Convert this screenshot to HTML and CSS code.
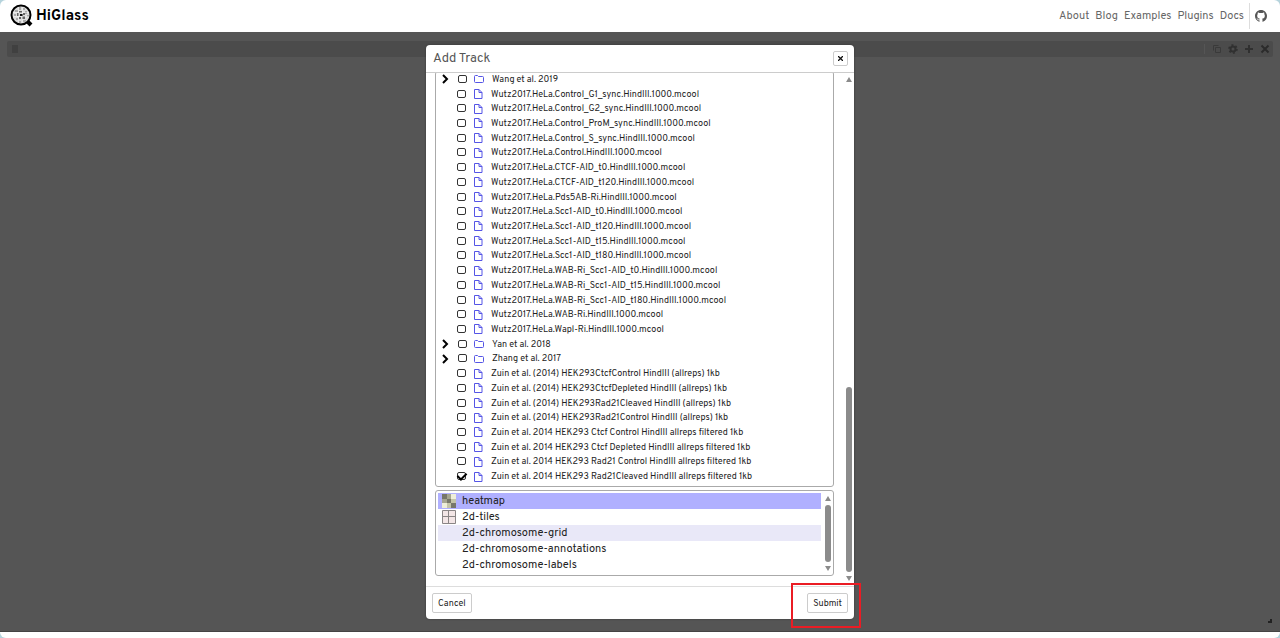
FILE: index.html
```html
<!DOCTYPE html>
<html lang="en">
<head>
    <meta charset="UTF-8">
    <title>HiGlass</title>
    <link rel="stylesheet" href="styles.css">
</head>
<body>
    <header class="topbar">
        <a class="brand" href="#">
            <svg width="24" height="24" viewBox="0 0 24 24">
                <path d="M17 17l4 4" stroke="#000" stroke-width="4"/>
                <circle cx="11" cy="11" r="9.500" fill="#ddd" stroke="#000" stroke-width="2"/>
                <path d="M9 3h2v3H9zM13 4h2v2h-2zM5 6h3v2H5zM4 10h2v2H4zM15 7h2v3h-2zM17 11h2v2h-2zM6 14h2v2H6zM13 16h3v2h-3zM9 17h2v2H9z" fill="#aaa"/>
                <path d="M9 7h3v2H9zM7 9h2v3H7zM12 12h3v3h-3zM9 13h2v2H9zM13 9h2v2h-2z" fill="#666"/>
                <path d="M10 10h3v2h-3z" fill="#111"/>
                <path d="M3 8.500h16M3 12.500h16M8.500 3v16M12.500 3v16" stroke="#fff" stroke-width=".4"/>
            </svg>
            <span>HiGlass</span>
        </a>
        <nav class="nav">
            <a href="#">About</a>
            <a href="#">Blog</a>
            <a href="#">Examples</a>
            <a href="#">Plugins</a>
            <a href="#">Docs</a>
        </nav>
        <a class="github" href="#" aria-label="GitHub">
            <svg width="12" height="12" viewBox="0 0 16 16" fill="#555"><path d="M8 0C3.580 0 0 3.580 0 8c0 3.540 2.290 6.530 5.470 7.590.4.070.550-.170.550-.380 0-.190-.010-.820-.010-1.490-2.010.370-2.530-.490-2.690-.940-.090-.230-.480-.940-.820-1.130-.280-.150-.680-.520-.010-.530.630-.010 1.080.580 1.230.820.720 1.210 1.870.870 2.330.660.070-.520.280-.870.510-1.070-1.780-.2-3.640-.890-3.640-3.950 0-.870.310-1.590.820-2.150-.080-.2-.360-1.020.080-2.120 0 0 .670-.210 2.200.820A7.600 7.600 0 0 1 8 3.860c.680 0 1.360.090 2 .270 1.530-1.040 2.200-.820 2.200-.820.440 1.100.160 1.920.080 2.120.510.560.820 1.270.820 2.150 0 3.070-1.870 3.750-3.650 3.950.290.250.540.730.540 1.480 0 1.070-.010 1.930-.010 2.200 0 .210.150.460.550.380A8 8 0 0 0 16 8c0-4.420-3.580-8-8-8z"/></svg>
        </a>
    </header>

    <main class="stage">
        <div class="view-bar">
            <span class="grip"></span>
            <div class="view-tools">
                <button aria-label="Copy view"><svg width="10" height="10" viewBox="0 0 10 10" fill="none" stroke="#3a3a3a"><path d="M3.500 3.500h5v5h-5z"/><path d="M1.500 6.500v-5h5"/></svg></button>
                <button aria-label="Settings"><svg width="10" height="10" viewBox="0 0 10 10" fill="none" stroke="#303030"><circle cx="5" cy="5" r="2.500" stroke-width="2"/><circle cx="5" cy="5" r="4" stroke-width="1.500" stroke-dasharray="2 2.190"/></svg></button>
                <button aria-label="Add track"><svg width="10" height="10" viewBox="0 0 10 10" stroke="#303030" stroke-width="2"><path d="M5 1v8M1 5h8"/></svg></button>
                <button aria-label="Close view"><svg width="10" height="10" viewBox="0 0 10 10" stroke="#2b2b2b" stroke-width="2"><path d="M1.500 1.500l7 7M8.500 1.500l-7 7"/></svg></button>
            </div>
        </div>
        <span class="resize"></span>

        <div class="overlay">
            <section class="modal">
                <div class="modal-header">
                    <h1>Add Track</h1>
                    <button class="btn close" aria-label="Close"><svg width="5" height="5" viewBox="0 0 5 5" stroke="#111" stroke-width="1.300"><path d="M0 0l5 5M5 0l-5 5"/></svg></button>
                </div>
                <div class="modal-body">
                    <div class="content">
                        <ul class="tree" id="tree"></ul>
                        <div class="types">
                            <ul class="type-list">
                                <li><button class="type selected"><svg width="14" height="14" viewBox="0 0 14 14"><path fill="#c4c4a8" d="M0 0h14v14H0z"/><path fill="#77776a" d="M0 0h5v5H0zM9 9h5v5H9zM5 5h4v4H5z"/><path fill="#eeeed8" d="M9 0h5v5H9zM0 9h5v5H0z"/><path fill="#a5a590" d="M5 0h4v5H5zM0 5h5v4H0z"/></svg>heatmap</button></li>
                                <li><button class="type"><svg width="14" height="14" viewBox="0 0 14 14" fill="#f3e6e6" stroke="#8a8585"><path d="M.5.500h13v13H.500zM6.500.500v13M.500 6.500h13"/></svg>2d-tiles</button></li>
                                <li><button class="type hovered"><span class="no-icon"></span>2d-chromosome-grid</button></li>
                                <li><button class="type"><span class="no-icon"></span>2d-chromosome-annotations</button></li>
                                <li><button class="type"><span class="no-icon"></span>2d-chromosome-labels</button></li>
                            </ul>
                            <div class="scrollbar">
                                <span class="arrow up"></span>
                                <span class="thumb"></span>
                                <span class="arrow down"></span>
                            </div>
                        </div>
                    </div>
                    <div class="scrollbar">
                        <span class="arrow up"></span>
                        <span class="track-space"></span>
                        <span class="thumb"></span>
                        <span class="arrow down"></span>
                    </div>
                </div>
                <div class="modal-footer">
                    <button class="btn">Cancel</button>
                    <button class="btn">Submit</button>
                </div>
                <span class="marker"></span>
            </section>
        </div>
    </main>

    <script>
        const datasets = [
            { name: 'Wang et al. 2019', folder: true },
            { name: 'Wutz2017.HeLa.Control_G1_sync.HindIII.1000.mcool' },
            { name: 'Wutz2017.HeLa.Control_G2_sync.HindIII.1000.mcool' },
            { name: 'Wutz2017.HeLa.Control_ProM_sync.HindIII.1000.mcool' },
            { name: 'Wutz2017.HeLa.Control_S_sync.HindIII.1000.mcool' },
            { name: 'Wutz2017.HeLa.Control.HindIII.1000.mcool' },
            { name: 'Wutz2017.HeLa.CTCF-AID_t0.HindIII.1000.mcool' },
            { name: 'Wutz2017.HeLa.CTCF-AID_t120.HindIII.1000.mcool' },
            { name: 'Wutz2017.HeLa.Pds5AB-Ri.HindIII.1000.mcool' },
            { name: 'Wutz2017.HeLa.Scc1-AID_t0.HindIII.1000.mcool' },
            { name: 'Wutz2017.HeLa.Scc1-AID_t120.HindIII.1000.mcool' },
            { name: 'Wutz2017.HeLa.Scc1-AID_t15.HindIII.1000.mcool' },
            { name: 'Wutz2017.HeLa.Scc1-AID_t180.HindIII.1000.mcool' },
            { name: 'Wutz2017.HeLa.WAB-Ri_Scc1-AID_t0.HindIII.1000.mcool' },
            { name: 'Wutz2017.HeLa.WAB-Ri_Scc1-AID_t15.HindIII.1000.mcool' },
            { name: 'Wutz2017.HeLa.WAB-Ri_Scc1-AID_t180.HindIII.1000.mcool' },
            { name: 'Wutz2017.HeLa.WAB-Ri.HindIII.1000.mcool' },
            { name: 'Wutz2017.HeLa.Wapl-Ri.HindIII.1000.mcool' },
            { name: 'Yan et al. 2018', folder: true },
            { name: 'Zhang et al. 2017', folder: true },
            { name: 'Zuin et al. (2014) HEK293CtcfControl HindIII (allreps) 1kb' },
            { name: 'Zuin et al. (2014) HEK293CtcfDepleted HindIII (allreps) 1kb' },
            { name: 'Zuin et al. (2014) HEK293Rad21Cleaved HindIII (allreps) 1kb' },
            { name: 'Zuin et al. (2014) HEK293Rad21Control HindIII (allreps) 1kb' },
            { name: 'Zuin et al. 2014 HEK293 Ctcf Control HindIII allreps filtered 1kb' },
            { name: 'Zuin et al. 2014 HEK293 Ctcf Depleted HindIII allreps filtered 1kb' },
            { name: 'Zuin et al. 2014 HEK293 Rad21 Control HindIII allreps filtered 1kb' },
            { name: 'Zuin et al. 2014 HEK293 Rad21Cleaved HindIII allreps filtered 1kb', checked: true }
        ];

        const chevron = '<svg width="8" height="10" viewBox="0 0 8 10" fill="none" stroke="#000" stroke-width="2"><path d="M2 1l4 4-4 4"/></svg>';
        const folderIcon = '<svg width="10" height="10" viewBox="0 0 10 10" fill="none" stroke="#5555e6"><path d="M.5 7.500V2.500q0-1 1-1h2l1 1H8.500q1 0 1 1v4q0 1-1 1h-7q-1 0-1-1z"/></svg>';
        const fileIcon = '<svg width="10" height="10" viewBox="0 0 10 10" fill="none" stroke="#5555e6"><path d="M1.500.500h4.500l3 3v6h-7.500zM6 .500v3h3"/></svg>';

        document.getElementById('tree').innerHTML = datasets.map((item, i) => `
            <li class="row ${item.folder ? 'folder' : ''}">
                ${item.folder ? `<button class="toggle" aria-label="Expand">${chevron}</button>` : '<span class="toggle"></span>'}
                <input type="checkbox" id="dataset-${i}" ${item.checked ? 'checked' : ''}>
                ${item.folder ? folderIcon : fileIcon}
                <label for="dataset-${i}">${item.name}</label>
            </li>`).join('');
    </script>
</body>
</html>
```
FILE: styles.css
```css
* {
    box-sizing: border-box;
}

html {
    background: #b5d3dc;
}

body {
    display: flex;
    flex-direction: column;
    height: 100vh;
    margin: 0;
    padding-bottom: 6px;
    overflow: hidden;
    border-radius: 6px;
    background: #fff;
    color: #222;
    font-family: Overpass, Roboto, sans-serif;
    font-size: 11px;
}

ul {
    margin: 0;
    padding: 0;
    list-style: none;
}

button {
    margin: 0;
    padding: 0;
    border: none;
    background: none;
    color: inherit;
    font: inherit;
    cursor: pointer;
}

svg {
    display: block;
    flex: none;
}

a {
    color: inherit;
    text-decoration: none;
}

.topbar {
    display: flex;
    align-items: center;
    height: 32px;
    padding: 0 13px 0 10px;
}

.brand {
    display: flex;
    align-items: center;
    gap: 2px;
    margin-right: auto;
    color: #000;
    font-size: 15px;
    font-weight: bold;
}

.nav {
    display: flex;
    gap: 6px;
    color: #666;
}

.github {
    display: flex;
    align-items: center;
    height: 26px;
    margin-left: 5px;
    padding-left: 5px;
    border-left: 1px solid #ddd;
}

.stage {
    position: relative;
    flex: 1;
    padding: 9px 7px;
    background: #555;
    border-bottom: 1px solid #444;
}

.view-bar {
    display: flex;
    align-items: center;
    justify-content: space-between;
    height: 16px;
    padding: 0 3px 0 5px;
    border-radius: 2px;
    background: #4b4b4b;
}

.grip {
    width: 6px;
    height: 8px;
    background: #404040;
}

.view-tools {
    display: flex;
    gap: 6px;
    padding-left: 7px;
    border-left: 1px solid #555;
}

.resize {
    position: absolute;
    right: 8px;
    bottom: 8px;
    width: 4px;
    height: 4px;
    border-right: 2px solid #222;
    border-bottom: 2px solid #222;
}

.overlay {
    position: absolute;
    inset: 0;
    display: flex;
    justify-content: center;
    padding: 13px 12px 12px;
}

.modal {
    position: relative;
    display: flex;
    flex-direction: column;
    width: 100%;
    max-width: 428px;
    border-radius: 4px;
    background: #fff;
    box-shadow: 0 0 2px #333;
}

.modal-header {
    display: flex;
    align-items: center;
    justify-content: space-between;
    height: 28px;
    padding: 0 6px 0 7px;
    border-bottom: 1px solid #ccc;
}

.modal-header h1 {
    margin: 0;
    color: #555;
    font-size: 13px;
    font-weight: normal;
}

.btn {
    height: 20px;
    padding: 0 5px;
    border: 1px solid #ccc;
    border-radius: 2px;
    background: #fff;
    font-size: 9px;
}

.close {
    width: 15px;
    height: 15px;
    padding: 0 4px;
}

.modal-body {
    display: flex;
    flex: 1;
    gap: 11px;
    min-height: 0;
    padding: 0 1px 0 9px;
    overflow: hidden;
}

/* scrolled to the end, so the tree is cut off at the top */
.content {
    display: flex;
    flex: 1;
    flex-direction: column;
    justify-content: flex-end;
    gap: 3px;
    min-width: 0;
    padding-bottom: 10px;
}

.tree {
    display: grid;
    flex: none;
    grid-auto-rows: 1fr;
    height: 416px;
    padding: 0 5px 2px;
    border: 1px solid #aaa;
    border-radius: 3px;
    font-size: 9px;
}

.row {
    display: flex;
    align-items: center;
    min-height: 0;
}

.row label {
    margin-left: 8px;
    white-space: nowrap;
}

.row input {
    display: flex;
    justify-content: center;
    width: 9px;
    height: 8px;
    margin: 0 7px 1px;
    appearance: none;
    border: 1px solid #333;
    border-radius: 2px;
}

.row input:checked::after {
    content: "";
    flex: none;
    width: 4px;
    height: 7px;
    margin: -2px 0 0 1px;
    border-right: 2px solid #000;
    border-bottom: 2px solid #000;
    transform: rotate(45deg);
}

.folder input {
    margin: 0 7px 1px 8px;
}

.toggle {
    width: 9px;
}

.types {
    display: flex;
    height: 86px;
    padding: 2px 1px 2px 2px;
    border: 1px solid #aaa;
    border-radius: 3px;
}

.type-list {
    flex: 1;
}

.type {
    display: flex;
    align-items: center;
    gap: 6px;
    width: 100%;
    height: 16px;
    padding-left: 4px;
}

.no-icon {
    width: 14px;
}

.selected {
    background: #b0b0ff;
}

.hovered {
    background: #e9e8f8;
}

.scrollbar {
    display: flex;
    flex-direction: column;
    align-items: center;
    gap: 4px;
    width: 8px;
    padding: 4px 0 5px;
}

.types .scrollbar {
    margin-left: 3px;
    padding: 3px 0 2px;
}

.thumb {
    flex: 1;
    width: 6px;
    border-radius: 3px;
    background: #8b8b8b;
}

.track-space {
    height: 59%;
}

.arrow {
    border: 3px solid transparent;
}

.up {
    border-top: none;
    border-bottom: 5px solid #8b8b8b;
}

.down {
    border-top: 5px solid #8b8b8b;
    border-bottom: none;
}

.modal-footer {
    display: flex;
    align-items: center;
    justify-content: space-between;
    height: 33px;
    padding: 0 6px;
    border-top: 1px solid #ddd;
}

.marker {
    position: absolute;
    right: -7px;
    bottom: -9px;
    width: 70px;
    height: 45px;
    border: 2px solid #ea1c24;
    pointer-events: none;
}
```
